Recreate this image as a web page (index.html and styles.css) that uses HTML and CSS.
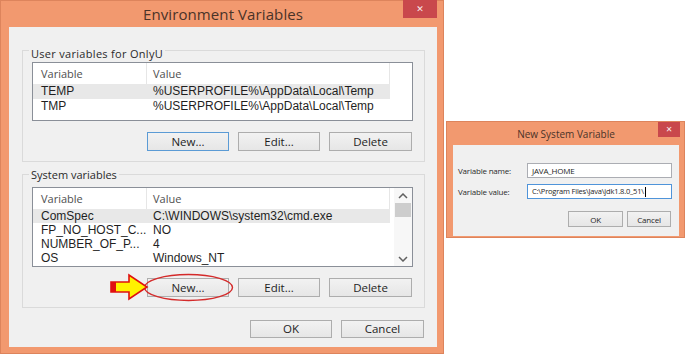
FILE: index.html
```html
<!DOCTYPE html>
<html>
<head>
<meta charset="utf-8">
<link rel="stylesheet" href="styles.css">
</head>
<body>
<div class="page">
  <div class="win main">
    <div class="titlebar"><span class="title">Environment Variables</span></div>
    <div class="close close-lg">&#x2715;</div>
    <div class="content">
      <div class="group g1">
        <span class="legend">User variables for OnlyU</span>
        <div class="list l1">
          <div class="hdr"><div class="c1">Variable</div><div class="c2">Value</div></div>
          <div class="row sel"><div class="c1">TEMP</div><div class="c2">%USERPROFILE%\AppData\Local\Temp</div></div>
          <div class="row"><div class="c1">TMP</div><div class="c2">%USERPROFILE%\AppData\Local\Temp</div></div>
        </div>
        <div class="btns">
          <button class="btn w82 default">New...</button>
          <button class="btn w82">Edit...</button>
          <button class="btn w83">Delete</button>
        </div>
      </div>
      <div class="group g2">
        <span class="legend">System variables</span>
        <div class="list l2">
          <div class="tbl">
            <div class="hdr"><div class="c1">Variable</div><div class="c2">Value</div></div>
            <div class="row sel"><div class="c1">ComSpec</div><div class="c2">C:\WINDOWS\system32\cmd.exe</div></div>
            <div class="row"><div class="c1">FP_NO_HOST_C...</div><div class="c2">NO</div></div>
            <div class="row"><div class="c1">NUMBER_OF_P...</div><div class="c2">4</div></div>
            <div class="row"><div class="c1">OS</div><div class="c2">Windows_NT</div></div>
          </div>
          <div class="sbar">
            <div class="arrow"><svg width="10" height="6" viewBox="0 0 10 6"><path d="M1 5 L5 1 L9 5" fill="none" stroke="#606060" stroke-width="1.5"/></svg></div>
            <div class="thumb"></div>
            <div class="track"></div>
            <div class="arrow"><svg width="10" height="6" viewBox="0 0 10 6"><path d="M1 1 L5 5 L9 1" fill="none" stroke="#606060" stroke-width="1.5"/></svg></div>
          </div>
        </div>
        <div class="btns">
          <button class="btn w82">New...</button>
          <button class="btn w82">Edit...</button>
          <button class="btn w83">Delete</button>
        </div>
      </div>
      <div class="footer">
        <button class="btn w82">OK</button>
        <button class="btn w83">Cancel</button>
      </div>
    </div>
    <svg class="annot" width="128" height="32" viewBox="0 0 128 32">
      <ellipse cx="80.5" cy="15.5" rx="44" ry="13" fill="none" stroke="#d42a2a" stroke-width="1.4"/>
      <polygon points="3,10 21,10 21,3 39,15 21,27 21,20 3,20" fill="#fff200" stroke="#e01010" stroke-width="1.6" stroke-linejoin="miter"/>
      <rect x="3" y="10" width="5" height="10" fill="#e01010"/>
    </svg>
  </div>

  <div class="win sub">
    <div class="titlebar sub-title"><span class="title">New System Variable</span></div>
    <div class="close close-sm">&#x2715;</div>
    <div class="content sub-content">
      <div class="frow">
        <span class="flabel">Variable name:</span>
        <div class="field">JAVA_HOME</div>
      </div>
      <div class="frow">
        <span class="flabel">Variable value:</span>
        <div class="field focus">C:\Program Files\Java\jdk1.8.0_51\<span class="caret"></span></div>
      </div>
      <div class="sbtns">
        <button class="btn sbtn ok">OK</button>
        <button class="btn sbtn cancel">Cancel</button>
      </div>
    </div>
  </div>
</div>
</body>
</html>
```
FILE: styles.css
```css
* { box-sizing: border-box; }
body {
  margin: 0;
  background: #ffffff;
  font-family: "Open Sans", "Liberation Sans", sans-serif;
  color: #1e1e1e;
}
.page {
  display: flex;
  align-items: flex-start;
  width: 687px;
  height: 358px;
}
.win {
  position: relative;
  display: flex;
  flex-direction: column;
  background: #f2996f;
  border: 1px solid #dd845c;
}
.main {
  width: 444px;
  height: 354px;
  padding: 0 6px 6px 8px;
}
.titlebar {
  height: 26px;
  display: flex;
  align-items: center;
  justify-content: center;
}
.title {
  font-size: 15px;
  color: #4a3328;
  letter-spacing: 0.1px;
}
.close {
  position: absolute;
  background: #c9484c;
  color: #f7eaea;
  display: flex;
  align-items: center;
  justify-content: center;
  font-family: "DejaVu Sans", sans-serif;
}
.close-lg {
  top: -1px;
  right: 6px;
  width: 34px;
  height: 18px;
  font-size: 9px;
  font-weight: bold;
}
.content {
  flex: 1;
  background: #f0f0f0;
  padding: 23px 12px 0 13px;
  font-size: 11px;
}
.group {
  border: 1px solid #dadada;
  padding: 0 12px 10px 9px;
}
.legend {
  display: block;
  width: max-content;
  height: 12px;
  line-height: 12px;
  margin: -3px 0 0 -3px;
  padding: 0 2px;
  background: #f0f0f0;
  color: #2a2a2a;
}
.g1 .legend { letter-spacing: 0.3px; }
.g2 { margin-top: 12px; }
.g2 .legend { margin-top: -6px; }
.list {
  background: #ffffff;
  border: 1px solid #8a8f98;
  margin-right: -1px;
  color: #222222;
}
.l1 {
  margin-top: 2px;
  height: 59px;
}
.l2 {
  margin-top: 6px;
  height: 80px;
  display: flex;
}
.tbl { flex: 1; }
.hdr, .row {
  display: flex;
}
.hdr {
  height: 21px;
  line-height: 21px;
  color: #4f4f4f;
}
.hdr .c1, .hdr .c2 {
  border-right: 1px solid #e6e6e6;
}
.row {
  font-family: "Liberation Sans", Arial, sans-serif;
  font-size: 12px;
  color: #1f1f1f;
}
.c1 {
  width: 114px;
  padding-left: 8px;
  white-space: nowrap;
}
.c2 {
  width: 243px;
  padding-left: 6px;
  white-space: nowrap;
}
.l1 .row {
  height: 15px;
  line-height: 15px;
}
.l2 .row {
  height: 14px;
  line-height: 14px;
}
.row.sel {
  width: 357px;
  background: #e8e8e8;
}
.sbar {
  width: 18px;
  display: flex;
  flex-direction: column;
  background: #f7f7f7;
  padding: 0 1px;
}
.arrow {
  height: 15px;
  display: flex;
  align-items: center;
  justify-content: center;
}
.thumb {
  height: 14px;
  background: #cdcdcd;
}
.track { flex: 1; }
.btns {
  display: flex;
  justify-content: flex-end;
  gap: 9px;
  margin-top: 11px;
}
.btn {
  height: 19px;
  border: 1px solid #adadad;
  background: linear-gradient(#f2f2f2, #e6e6e6);
  font-family: "Open Sans", "Liberation Sans", sans-serif;
  font-size: 11.5px;
  color: #1e1e1e;
  padding: 0;
  line-height: 16px;
}
.w82 { width: 82px; }
.w83 { width: 83px; }
.btn.default {
  border-color: #5b9bd5;
}
.footer {
  display: flex;
  justify-content: flex-end;
  gap: 9px;
  margin-top: 12px;
  margin-right: 1px;
}
.footer .btn { height: 18px; }
.annot {
  position: absolute;
  left: 107px;
  top: 271px;
}

/* second dialog */
.sub {
  width: 239px;
  height: 117px;
  margin-top: 121px;
  margin-left: 2px;
  padding: 0 5px 1px 6px;
}
.sub-title { height: 23px; }
.sub-title .title {
  font-size: 10px;
  letter-spacing: 0;
}
.close-sm {
  top: 0;
  right: 4px;
  width: 22px;
  height: 15px;
  font-size: 8px;
}
.sub-content {
  padding: 18px 7px 0 5px;
  font-size: 8px;
  letter-spacing: -0.2px;
}
.frow {
  display: flex;
  align-items: center;
  height: 15px;
}
.frow + .frow { margin-top: 6px; }
.flabel {
  width: 69px;
  color: #2a2a2a;
}
.field {
  width: 145px;
  height: 15px;
  line-height: 13px;
  border: 1px solid #abadb3;
  background: #ffffff;
  padding-left: 4px;
  color: #1e1e1e;
  display: flex;
  align-items: center;
  white-space: nowrap;
}
.field.focus {
  border-color: #4f94da;
  font-size: 7.5px;
  letter-spacing: -0.2px;
}
.caret {
  display: inline-block;
  width: 1px;
  height: 10px;
  background: #000;
  margin-left: 1px;
}
.sbtns {
  display: flex;
  justify-content: flex-end;
  gap: 4px;
  margin-top: 12px;
  margin-right: 1px;
}
.sbtn {
  height: 16px;
  font-size: 8px;
  line-height: 13px;
  letter-spacing: -0.2px;
}
.ok { width: 55px; }
.cancel { width: 44px; }
```
